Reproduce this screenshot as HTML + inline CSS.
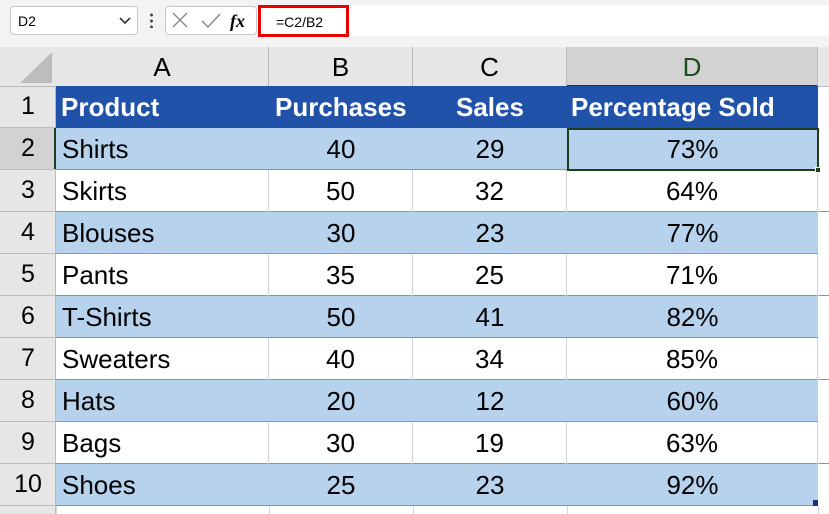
<!DOCTYPE html><html><head><style>
html,body{margin:0;width:829px;height:514px;overflow:hidden}
body{background:#fff;font-family:"Liberation Sans",sans-serif;position:relative}
.a{position:absolute;box-sizing:border-box}
.t{display:flex;align-items:center;font-size:26px;color:#000;white-space:nowrap}
</style></head><body>
<div class="a" style="left:0;top:0;width:829px;height:47px;background:#f3f3f3"></div>
<div class="a" style="left:10px;top:6px;width:128px;height:29px;background:#fff;border:1px solid #c8c8c8;border-radius:4px;font-size:14px;padding:6px 7px">D2<svg style="position:absolute;right:6px;top:10px" width="12" height="8"><path d="M1 1L6 6L11 1" stroke="#333" stroke-width="1.6" fill="none"/></svg></div>
<div class="a" style="left:150px;top:12px;width:3px;height:16px;background:radial-gradient(circle,#444 1.3px,transparent 1.6px) 0 0/3px 6px"></div>
<div class="a" style="left:165px;top:6px;width:92px;height:29px;background:#fff;border:1px solid #c8c8c8;border-radius:4px"></div>
<svg class="a" style="left:170px;top:10px" width="85" height="22"><path d="M3 3L17 17M17 3L3 17" stroke="#888" stroke-width="1.4"/><path d="M32 11L38 17L50 4" stroke="#888" stroke-width="1.4" fill="none"/><text x="60" y="17" font-family="Liberation Serif" font-style="italic" font-weight="bold" font-size="18">fx</text></svg>
<div class="a" style="left:257px;top:5px;width:572px;height:31px;background:#fff"></div>
<div class="a" style="left:258px;top:5px;width:91px;height:32px;border:3px solid #e60000;font-size:14px;padding:6px 0 0 15px">=C2/B2</div>
<div class="a" style="left:0;top:47px;width:829px;height:40px;background:#e6e6e6;border-bottom:1px solid #bbb"></div>
<div class="a" style="left:0;top:87px;width:56px;height:427px;background:#e6e6e6;border-right:1px solid #bbb"></div>
<svg class="a" style="left:18px;top:50px" width="36" height="34"><path d="M34 2L34 33L2 33Z" fill="#bdbdbd"/></svg>
<div class="a" style="left:567px;top:47px;width:251px;height:40px;background:#d2d2d2;border-bottom:2px solid #1e3e1e"></div>
<div class="a" style="left:0;top:128px;width:56px;height:42px;background:#d2d2d2;border-right:2px solid #1e3e1e"></div>
<div id="g"></div>
<script>
var cols=[56,269,413,567,818],L=["A","B","C","D"],h="";
for(var i=0;i<4;i++){h+='<div class="a t" style="left:'+cols[i]+'px;top:47px;width:'+(cols[i+1]-cols[i])+'px;height:40px;justify-content:center;border-right:1px solid #bbb;'+(i==3?'color:#1e4e1e':'')+'">'+L[i]+'</div>';}
var d=[["Shirts",40,29,"73%"],["Skirts",50,32,"64%"],["Blouses",30,23,"77%"],["Pants",35,25,"71%"],["T-Shirts",50,41,"82%"],["Sweaters",40,34,"85%"],["Hats",20,12,"60%"],["Bags",30,19,"63%"],["Shoes",25,23,"92%"]];
h+='<div class="a" style="left:56px;top:86px;width:762px;height:42px;background:#1f52a8"></div>';
var hd=["Product","Purchases","Sales","Percentage Sold"],hx=[61,275,456,571];
for(var i=0;i<4;i++)h+='<div class="a t" style="left:'+hx[i]+'px;top:86px;height:42px;color:#fff;font-weight:bold">'+hd[i]+'</div>';
for(var r=0;r<10;r++){var y=86+r*42;h+='<div class="a t" style="left:0;top:'+y+'px;width:56px;height:42px;justify-content:center;border-bottom:1px solid #bbb;font-size:25px">'+(r+1)+'</div>';}
for(var r=0;r<9;r++){var y=128+r*42,bg=r%2==0;
 h+='<div class="a" style="left:56px;top:'+y+'px;width:'+(bg?762:773)+'px;height:42px;'+(bg?'background:#b7d2ed;border-bottom:1px solid #6f9bd0':'border-bottom:1px solid #6f9bd0')+'"></div>';
 for(var i=0;i<4;i++){h+='<div class="a t" style="left:'+cols[i]+'px;top:'+y+'px;width:'+(cols[i+1]-cols[i])+'px;height:42px;'+(bg?'':'border-right:1px solid #d4d4d4;')+(i==0?'padding-left:6px':'justify-content:center')+'">'+d[r][i]+'</div>';}}
for(var i=0;i<5;i++)h+='<div class="a" style="left:'+cols[i]+'px;top:506px;width:1px;height:8px;background:#d4d4d4"></div>';
h+='<div class="a" style="left:567px;top:128px;width:252px;height:43px;border:2px solid #1e3e1e"></div><div class="a" style="left:815px;top:167px;width:6px;height:6px;background:#1e3e1e;border:1px solid #fff"></div>';
h+='<div class="a" style="left:813px;top:500px;width:5px;height:6px;background:#1f2f80"></div>';
document.getElementById("g").innerHTML=h;
</script>
</body></html>
